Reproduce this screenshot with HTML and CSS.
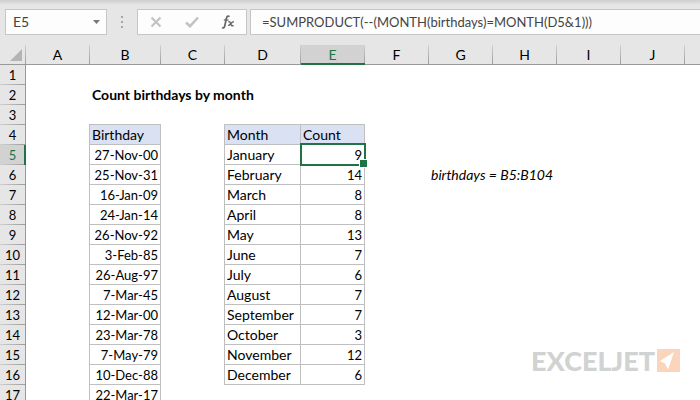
FILE: index.html
```html
<!DOCTYPE html>
<html lang="en">
  <head>
    <meta charset="UTF-8" />
    <meta name="viewport" content="width=device-width, initial-scale=1.0" />
    <title>Count birthdays by month</title>
    <link rel="stylesheet" href="styles.css">
  </head>
  <body>
    <div class="formula-bar">
      <div class="name-box">
        <input type="text" class="name-input" value="E5" aria-label="Name box" />
        <button class="name-toggle" aria-label="Show names">
          <svg width="7" height="4" viewBox="0 0 7 4"><path d="M0 0h7L3.500 4z" fill="#777" /></svg>
        </button>
      </div>
      <div class="grip"><i></i><i></i><i></i></div>
      <div class="actions">
        <button aria-label="Cancel">
          <svg width="12" height="12" viewBox="0 0 12 12"><path d="M1.500 1.500l9 9M10.500 1.500l-9 9" fill="none" stroke="#c3c3c3" stroke-width="2.200" /></svg>
        </button>
        <button aria-label="Enter">
          <svg width="14" height="12" viewBox="0 0 14 12"><path d="M1 6.500l4 3.800L13 1.500" fill="none" stroke="#c3c3c3" stroke-width="2.600" /></svg>
        </button>
        <button aria-label="Insert function">
          <svg width="14" height="14" viewBox="0 0 14 14" fill="none" stroke="#666">
            <path d="M8.500 1.600C7 .4 5.900 1.400 5.400 3.500L3.700 11C3.300 12.800 2.300 13.400 1 12.600" stroke-width="1.700" />
            <path d="M2.800 5h4.700" stroke-width="1.200" />
            <path d="M7.300 6.900c1.500-.6 2 .3 2.400 1.700.4 1.500 1 2.600 2.800 1.900M12.900 6.800c-1.500-.2-2.400 1.100-3.200 2-.7.900-1.400 1.800-2.700 1.600" stroke-width="1.400" />
          </svg>
        </button>
      </div>
      <input type="text" class="formula-input" value="=SUMPRODUCT(--(MONTH(birthdays)=MONTH(D5&amp;1)))" aria-label="Formula" />
    </div>

    <div class="sheet">
      <table class="grid">
        <colgroup>
          <col class="col-head" />
          <col />
          <col class="col-date" />
          <col />
          <col class="col-month" />
          <col span="7" />
        </colgroup>
        <thead>
          <tr>
            <th class="corner"><svg width="12" height="12" viewBox="0 0 12 12"><path d="M12 0v12H0z" fill="#b4b4b4" /></svg></th>
            <th>A</th>
            <th>B</th>
            <th>C</th>
            <th>D</th>
            <th class="active">E</th>
            <th>F</th>
            <th>G</th>
            <th>H</th>
            <th>I</th>
            <th>J</th>
            <th></th>
          </tr>
        </thead>
        <tbody>
          <tr><th>1</th><td colspan="11"></td></tr>
          <tr><th>2</th><td></td><td colspan="3" class="title">Count birthdays by month</td><td colspan="7"></td></tr>
          <tr><th>3</th><td colspan="11"></td></tr>
          <tr><th>4</th><td></td><td class="cell label">Birthday</td><td></td><td class="cell label">Month</td><td class="cell label">Count</td><td colspan="6"></td></tr>
          <tr><th class="active">5</th><td></td><td class="cell num">27-Nov-00</td><td></td><td class="cell">January</td><td class="cell num selected">9</td><td colspan="6"></td></tr>
          <tr><th>6</th><td></td><td class="cell num">25-Nov-31</td><td></td><td class="cell">February</td><td class="cell num">14</td><td></td><td colspan="5" class="note">birthdays = B5:B104</td></tr>
          <tr><th>7</th><td></td><td class="cell num">16-Jan-09</td><td></td><td class="cell">March</td><td class="cell num">8</td><td colspan="6"></td></tr>
          <tr><th>8</th><td></td><td class="cell num">24-Jan-14</td><td></td><td class="cell">April</td><td class="cell num">8</td><td colspan="6"></td></tr>
          <tr><th>9</th><td></td><td class="cell num">26-Nov-92</td><td></td><td class="cell">May</td><td class="cell num">13</td><td colspan="6"></td></tr>
          <tr><th>10</th><td></td><td class="cell num">3-Feb-85</td><td></td><td class="cell">June</td><td class="cell num">7</td><td colspan="6"></td></tr>
          <tr><th>11</th><td></td><td class="cell num">26-Aug-97</td><td></td><td class="cell">July</td><td class="cell num">6</td><td colspan="6"></td></tr>
          <tr><th>12</th><td></td><td class="cell num">7-Mar-45</td><td></td><td class="cell">August</td><td class="cell num">7</td><td colspan="6"></td></tr>
          <tr><th>13</th><td></td><td class="cell num">12-Mar-00</td><td></td><td class="cell">September</td><td class="cell num">7</td><td colspan="6"></td></tr>
          <tr><th>14</th><td></td><td class="cell num">23-Mar-78</td><td></td><td class="cell">October</td><td class="cell num">3</td><td colspan="6"></td></tr>
          <tr><th>15</th><td></td><td class="cell num">7-May-79</td><td></td><td class="cell">November</td><td class="cell num">12</td><td colspan="6"></td></tr>
          <tr><th>16</th><td></td><td class="cell num">10-Dec-88</td><td></td><td class="cell">December</td><td class="cell num">6</td><td colspan="6"></td></tr>
          <tr><th>17</th><td></td><td class="cell num">22-Mar-17</td><td colspan="9"></td></tr>
        </tbody>
      </table>
    </div>

    <div class="logo">
      <span>EXCELJET</span>
      <svg width="23" height="23" viewBox="0 0 23 23"><path d="M0 0h23v23H0z" fill="#fbd5bb" /><path d="M17 3L3 12l5 2.500 3 6z" fill="#fff" /></svg>
    </div>
  </body>
</html>
```

FILE: styles.css
```css
* {
  box-sizing: border-box;
}

body {
  margin: 0;
  height: 100vh;
  overflow: hidden;
  position: relative;
  background-color: #fff;
  font-family: Lato, Carlito, sans-serif;
  font-size: 14px;
  line-height: 18px;
  color: #000;
}

button,
input {
  font: inherit;
  color: #444;
  border: none;
  background: none;
  padding: 0;
  margin: 0;
}

button {
  display: flex;
  align-items: center;
  justify-content: center;
}

/* formula bar */
.formula-bar {
  display: flex;
  padding: 9px 0 10px 5px;
  background: linear-gradient(#cfcfcf, #e6e6e6 5px);
}

.name-box,
.actions,
.formula-input {
  height: 26px;
  border: 1px solid #c6c6c6;
  background-color: #fdfdfd;
}

.name-box {
  display: flex;
  width: 102px;
}

.name-input {
  flex: 1;
  min-width: 0;
  padding-left: 7px;
}

.name-toggle {
  width: 20px;
}

.grip {
  width: 30px;
  display: flex;
  flex-direction: column;
  align-items: center;
  justify-content: center;
  gap: 3px;
}

.grip i {
  width: 2px;
  height: 2px;
  background-color: #a6a6a6;
}

.actions {
  display: flex;
  width: 110px;
  margin-right: 3px;
}

.actions button {
  flex: 1;
}

.formula-input {
  flex: 1;
  min-width: 0;
  padding-left: 11px;
  border-right: none;
  font-size: 13px;
}

/* sheet */
.sheet {
  overflow: hidden;
}

.grid {
  table-layout: fixed;
  width: 749px;
  border-spacing: 0;
}

col {
  width: 64px;
}

.col-head {
  width: 26px;
}

.col-date {
  width: 71px;
}

.col-month {
  width: 76px;
}

.grid tr {
  height: 20px;
}

.grid th,
.grid td {
  padding: 0 3px 0 2px;
  white-space: nowrap;
  text-align: left;
}

.grid th {
  font-weight: normal;
  text-align: center;
  background: linear-gradient(#d0d0d0, #999) right / 1px 100% no-repeat #e6e6e6;
}

thead th {
  box-shadow: inset 0 -1px #999;
}

tbody th {
  font-size: 13px;
  box-shadow: inset -1px 0 #999;
}

.grid tbody th {
  background: linear-gradient(to right, #d0d0d0, #999) bottom / 100% 1px no-repeat #e6e6e6;
}

.grid th.active {
  color: #217346;
  background-color: #d2d2d2;
}

thead th.active {
  box-shadow: inset 0 -2px #217346;
}

tbody th.active {
  box-shadow: inset -2px 0 #217346;
}

.corner svg {
  display: block;
  margin-left: 8px;
}

.cell {
  position: relative;
}

/* each border lies over the edge of the cell before it */
.cell::before {
  content: "";
  position: absolute;
  inset: -1px 0 0 -1px;
  border: 1px solid #bfbfbf;
}

.label {
  background-color: #d9e1f2;
}

.grid .num {
  font-size: 13px;
  text-align: right;
}

.title {
  font-weight: bold;
}

.note {
  font-style: italic;
}

.selected {
  z-index: 1;
}

.selected::before {
  inset: -2px -1px -1px -1px;
  border: 2px solid #217346;
}

/* fill handle */
.selected::after {
  content: "";
  position: absolute;
  right: -3px;
  bottom: -3px;
  width: 7px;
  height: 7px;
  border: 1px solid #fff;
  background-color: #217346;
}

.logo {
  position: absolute;
  right: 20px;
  bottom: 28px;
  display: flex;
  align-items: center;
  gap: 2px;
  color: #d0d3d2;
  font-size: 27px;
  font-weight: 900;
  line-height: 23px;
}
```
